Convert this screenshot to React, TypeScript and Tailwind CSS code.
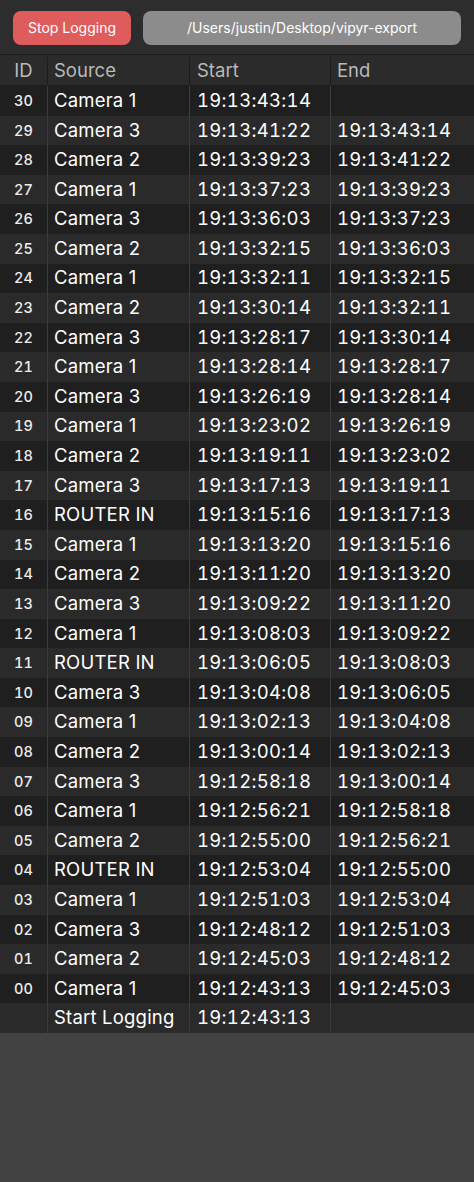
import React from "react";

const rows: [string, string, string, string][] = [
  ["30", "Camera 1", "19:13:43:14", ""],
  ["29", "Camera 3", "19:13:41:22", "19:13:43:14"],
  ["28", "Camera 2", "19:13:39:23", "19:13:41:22"],
  ["27", "Camera 1", "19:13:37:23", "19:13:39:23"],
  ["26", "Camera 3", "19:13:36:03", "19:13:37:23"],
  ["25", "Camera 2", "19:13:32:15", "19:13:36:03"],
  ["24", "Camera 1", "19:13:32:11", "19:13:32:15"],
  ["23", "Camera 2", "19:13:30:14", "19:13:32:11"],
  ["22", "Camera 3", "19:13:28:17", "19:13:30:14"],
  ["21", "Camera 1", "19:13:28:14", "19:13:28:17"],
  ["20", "Camera 3", "19:13:26:19", "19:13:28:14"],
  ["19", "Camera 1", "19:13:23:02", "19:13:26:19"],
  ["18", "Camera 2", "19:13:19:11", "19:13:23:02"],
  ["17", "Camera 3", "19:13:17:13", "19:13:19:11"],
  ["16", "ROUTER IN", "19:13:15:16", "19:13:17:13"],
  ["15", "Camera 1", "19:13:13:20", "19:13:15:16"],
  ["14", "Camera 2", "19:13:11:20", "19:13:13:20"],
  ["13", "Camera 3", "19:13:09:22", "19:13:11:20"],
  ["12", "Camera 1", "19:13:08:03", "19:13:09:22"],
  ["11", "ROUTER IN", "19:13:06:05", "19:13:08:03"],
  ["10", "Camera 3", "19:13:04:08", "19:13:06:05"],
  ["09", "Camera 1", "19:13:02:13", "19:13:04:08"],
  ["08", "Camera 2", "19:13:00:14", "19:13:02:13"],
  ["07", "Camera 3", "19:12:58:18", "19:13:00:14"],
  ["06", "Camera 1", "19:12:56:21", "19:12:58:18"],
  ["05", "Camera 2", "19:12:55:00", "19:12:56:21"],
  ["04", "ROUTER IN", "19:12:53:04", "19:12:55:00"],
  ["03", "Camera 1", "19:12:51:03", "19:12:53:04"],
  ["02", "Camera 3", "19:12:48:12", "19:12:51:03"],
  ["01", "Camera 2", "19:12:45:03", "19:12:48:12"],
  ["00", "Camera 1", "19:12:43:13", "19:12:45:03"],
  ["", "Start Logging", "19:12:43:13", ""],
];

const grid = "grid grid-cols-[48px_142px_141px_1fr]";

export default function App() {
  return (
    <div
      className="w-[474px] h-[1182px] bg-[#424242] flex flex-col overflow-hidden"
      style={{ fontFamily: "Inter, 'Noto Sans', sans-serif" }}
    >
      <div className="h-[55px] bg-[#2d2d2d] flex items-center gap-3 px-[13px] pt-[1px] border-b border-[#1b1b1b]">
        <button className="w-[118px] h-[34px] rounded-[8px] bg-[#de5d5c] text-white text-[14px] flex items-center justify-center">
          Stop Logging
        </button>
        <button className="flex-1 h-[34px] rounded-[8px] bg-[#8c8c8c] text-white text-[14px] flex items-center justify-center">
          /Users/justin/Desktop/vipyr-export
        </button>
      </div>
      <div className={`${grid} h-[31px] bg-[#2b2b2b] text-[#b9b9b9] text-[18.5px] border-b border-[#1c1c1c] pt-[2px]`}>
        <div className="flex items-center justify-center border-r border-[#1c1c1c]">ID</div>
        <div className="flex items-center pl-[6px] border-r border-[#1c1c1c]">Source</div>
        <div className="flex items-center pl-[7px] border-r border-[#1c1c1c]">Start</div>
        <div className="flex items-center pl-[6px]">End</div>
      </div>
      <div className="flex flex-col">
        {rows.map((r, i) => (
          <div
            key={i}
            className={`${grid} h-[29.6px] text-white ${i % 2 === 0 ? "bg-[#1f1f1f]" : "bg-[#2a2a2a]"}`}
          >
            <div className="flex items-center justify-center text-[14.5px] font-medium text-[#ececec] tabular-nums border-r border-[#3b3b3b]">
              {r[0]}
            </div>
            <div className="flex items-center pl-[6px] text-[18.5px] tracking-[0.2px] border-r border-[#3b3b3b]">{r[1]}</div>
            <div className="flex items-center pl-[7px] text-[18.5px] tabular-nums tracking-[0.3px] border-r border-[#3b3b3b]">{r[2]}</div>
            <div className="flex items-center pl-[6px] text-[18.5px] tabular-nums tracking-[0.3px]">{r[3]}</div>
          </div>
        ))}
      </div>
    </div>
  );
}
